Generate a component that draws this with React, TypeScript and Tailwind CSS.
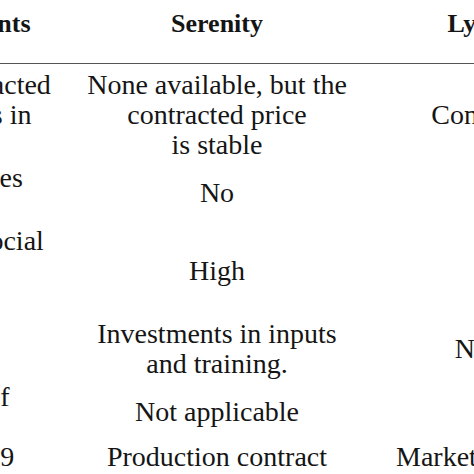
const rows = [
  {
    left: ["Contracted", "phases in", "euros"],
    mid: ["None available, but the", "contracted price", "is stable"],
    right: ["Contracts"],
  },
  { left: ["Bonuses", "paid"], mid: ["No"], right: [] },
  { left: ["The social", "effect", "level"], mid: ["High"], right: [] },
  { left: ["Costs", "borne"], mid: ["Investments in inputs", "and training."], right: ["None"] },
  { left: ["Cost of", "audits"], mid: ["Not applicable"], right: [] },
  { left: ["In 2019"], mid: ["Production contract"], right: ["Market contract"] },
];

function Lines({ items }: { items: string[] }) {
  return (
    <>
      {items.map((t, i) => (
        <div key={i}>{t}</div>
      ))}
    </>
  );
}

export default function App() {
  return (
    <div
      className="w-[474px] h-[474px] overflow-hidden bg-white text-[#151515]"
      style={{ fontFamily: '"Liberation Serif", "Times New Roman", serif' }}
    >
      <table className="-ml-[80px] w-[696px] min-w-[696px] table-fixed border-separate border-spacing-0 whitespace-nowrap">
        <colgroup>
          <col className="w-[160px]" />
          <col className="w-[274px]" />
          <col className="w-[262px]" />
        </colgroup>
        <thead>
          <tr className="text-[26px] font-bold leading-[30px]">
            <th className="pl-[8px] pt-[9px] pb-[24px] text-left border-b-[1.5px] border-[#555]">
              Elements
            </th>
            <th className="pt-[9px] pb-[24px] text-center border-b-[1.5px] border-[#555]">
              Serenity
            </th>
            <th className="pt-[9px] pb-[24px] text-center border-b-[1.5px] border-[#555]">
              Lyonel
            </th>
          </tr>
        </thead>
        <tbody className="text-[28px] leading-[30px]">
          {rows.map((r, i) => {
            const pad =
              i === 0
                ? "pt-[6px] pb-[1.5px]"
                : i === 4
                  ? "pt-[1.5px] pb-0"
                  : i === 5
                    ? "pt-0 pb-[1.5px]"
                    : "py-[1.5px]";
            return (
              <tr key={i}>
                <td className={`pl-[8px] text-left align-middle ${pad}`}>
                  <Lines items={r.left} />
                </td>
                <td className={`text-center align-middle ${pad}`}>
                  <Lines items={r.mid} />
                </td>
                <td className={`text-center align-middle ${pad}`}>
                  <Lines items={r.right} />
                </td>
              </tr>
            );
          })}
        </tbody>
      </table>
    </div>
  );
}
